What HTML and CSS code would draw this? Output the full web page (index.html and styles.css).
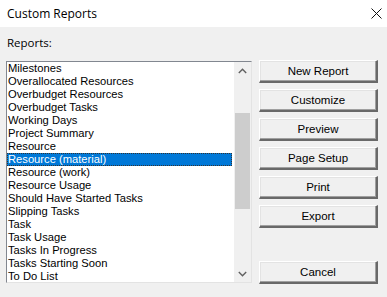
FILE: index.html
```html
<!DOCTYPE html>
<html>
<head>
<meta charset="utf-8">
<link rel="stylesheet" href="styles.css">
</head>
<body>
<div class="dialog">
  <div class="titlebar">
    <span class="title">Custom Reports</span>
    <svg class="close" width="11" height="11" viewBox="0 0 11 11"><path d="M0.5 0.5 L10.5 10.5 M10.5 0.5 L0.5 10.5" stroke="#111" stroke-width="1" fill="none"/></svg>
  </div>
  <div class="body">
    <div class="label">Reports:</div>
    <div class="row">
      <div class="listbox">
        <ul class="items">
          <li>Milestones</li>
          <li>Overallocated Resources</li>
          <li>Overbudget Resources</li>
          <li>Overbudget Tasks</li>
          <li>Working Days</li>
          <li>Project Summary</li>
          <li>Resource</li>
          <li class="selected">Resource (material)</li>
          <li>Resource (work)</li>
          <li>Resource Usage</li>
          <li>Should Have Started Tasks</li>
          <li>Slipping Tasks</li>
          <li>Task</li>
          <li>Task Usage</li>
          <li>Tasks In Progress</li>
          <li>Tasks Starting Soon</li>
          <li>To Do List</li>
        </ul>
        <div class="scrollbar">
          <div class="arrow"><svg width="9" height="6" viewBox="0 0 9 6"><path d="M0.8 5 L4.5 1.3 L8.2 5" stroke="#606060" stroke-width="1.4" fill="none"/></svg></div>
          <div class="track-top"></div>
          <div class="thumb"></div>
          <div class="track-rest"></div>
          <div class="arrow"><svg width="9" height="6" viewBox="0 0 9 6"><path d="M0.8 1 L4.5 4.7 L8.2 1" stroke="#606060" stroke-width="1.4" fill="none"/></svg></div>
        </div>
      </div>
      <div class="buttons">
        <button class="btn">New Report</button>
        <button class="btn">Customize</button>
        <button class="btn">Preview</button>
        <button class="btn">Page Setup</button>
        <button class="btn">Print</button>
        <button class="btn">Export</button>
        <button class="btn cancel">Cancel</button>
      </div>
    </div>
  </div>
</div>
</body>
</html>
```

FILE: styles.css
```css
html, body {
  margin: 0;
  padding: 0;
}
body {
  width: 387px;
  height: 297px;
  background: #f0f0f0;
  overflow: hidden;
  font-family: "Liberation Sans", Arial, sans-serif;
}
.dialog {
  width: 387px;
  height: 297px;
  display: flex;
  flex-direction: column;
}
.titlebar {
  height: 27px;
  background: #ffffff;
  display: flex;
  align-items: center;
  justify-content: space-between;
  padding: 0 5px 0 7px;
}
.title {
  font-family: "Open Sans", "Noto Sans", sans-serif;
  font-size: 12px;
  color: #000;
}
.body {
  padding: 0 9px 0 6px;
}
.label {
  font-family: "Open Sans", "Noto Sans", sans-serif;
  font-size: 11.5px;
  color: #000;
  height: 34px;
  line-height: 32px;
  padding-left: 1px;
}
.row {
  display: flex;
  gap: 7px;
  align-items: flex-start;
}
.listbox {
  width: 246px;
  height: 222px;
  box-sizing: border-box;
  border-top: 1px solid #828790;
  border-left: 1px solid #828790;
  border-right: 1px solid #e3e3e3;
  border-bottom: 1px solid #e3e3e3;
  background: #fff;
  display: flex;
}
.items {
  list-style: none;
  margin: 0;
  padding: 0;
  flex: 1;
  font-family: "Liberation Sans", Arial, sans-serif;
  font-size: 11.2px;
  color: #000;
}
.items li {
  height: 13px;
  line-height: 13px;
  padding-left: 1px;
  margin-right: 2px;
  white-space: nowrap;
}
.items li.selected {
  background: #0078d7;
  color: #fff;
  outline: 1px dotted #333;
  outline-offset: -1px;
}
.scrollbar {
  width: 17px;
  background: #f0f0f0;
  display: flex;
  flex-direction: column;
}
.arrow {
  height: 17px;
  display: flex;
  align-items: center;
  justify-content: center;
}
.track-top {
  height: 34px;
}
.thumb {
  height: 96px;
  background: #cdcdcd;
  margin: 0 1px;
}
.track-rest {
  flex: 1;
}
.buttons {
  width: 119px;
  height: 224px;
  margin-top: -1px;
  display: flex;
  flex-direction: column;
  gap: 6px;
}
.btn {
  height: 23px;
  box-sizing: border-box;
  margin: 0;
  padding: 0;
  background: #f0f0f0;
  border-top: 1px solid #ffffff;
  border-left: 1px solid #ffffff;
  border-right: 2px solid #696969;
  border-bottom: 2px solid #696969;
  box-shadow: inset -1px -1px 0 #a0a0a0, inset 1px 1px 0 #e3e3e3;
  font-family: "Liberation Sans", Arial, sans-serif;
  font-size: 11.5px;
  color: #000;
}
.cancel {
  margin-top: auto;
}
```
